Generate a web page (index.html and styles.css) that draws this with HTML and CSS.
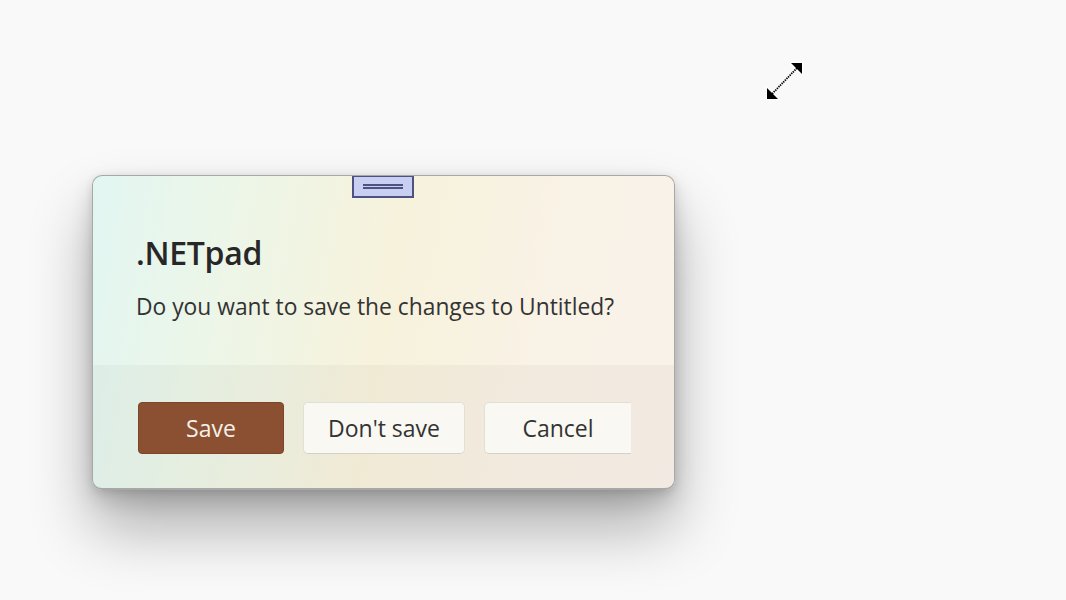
FILE: index.html
```html
<!DOCTYPE html>
<html>
<head>
<meta charset="utf-8">
<link rel="stylesheet" href="styles.css">
</head>
<body>
<div class="canvas">
  <svg class="cursor" width="48" height="44" viewBox="0 0 48 44">
    <g stroke="#fff" stroke-width="2.5" stroke-linejoin="round" fill="#fff">
      <path d="M42 5 L42 16 L31 5 Z"/>
      <path d="M7 41 L7 30 L18 41 Z"/>
      <line x1="37" y1="10" x2="12" y2="36"/>
    </g>
    <path d="M42 5 L42 16 L31 5 Z" fill="#000"/>
    <path d="M7 41 L7 30 L18 41 Z" fill="#000"/>
    <line x1="37" y1="10" x2="12" y2="36" stroke="#000" stroke-width="1.8" stroke-dasharray="1.4 0.9"/>
  </svg>
  <div class="dialog">
    <div class="handle"><span class="grip"></span></div>
    <div class="content">
      <h1 class="title">.NETpad</h1>
      <p class="message">Do you want to save the changes to Untitled?</p>
    </div>
    <div class="footer">
      <button class="btn primary">Save</button>
      <button class="btn">Don't save</button>
      <button class="btn cut">Cancel</button>
    </div>
  </div>
</div>
</body>
</html>
```
FILE: styles.css
```css
html, body {
  margin: 0;
  height: 100%;
  background: #f9f9f9;
  overflow: hidden;
}
.canvas {
  position: relative;
  height: 600px;
  padding: 175px 0 0 92px;
  box-sizing: border-box;
  font-family: "Open Sans", "Noto Sans", sans-serif;
}
.cursor {
  position: absolute;
  left: 760px;
  top: 58px;
}
.dialog {
  position: relative;
  width: 583px;
  height: 315px;
  box-sizing: border-box;
  border: 1px solid #a8a8a8;
  border-bottom: 2px solid #a8a8a8;
  border-radius: 10px;
  background:
    linear-gradient(100deg, #e2f6f2 0%, #ecf6e8 22%, #f7f2dc 50%, #f9f2e6 75%, #f9f2ea 100%);
  box-shadow: 0 38px 62px rgba(0, 0, 0, 0.3), 0 10px 22px rgba(0, 0, 0, 0.14), 0 2px 8px rgba(0,0,0,0.1);
  display: flex;
  flex-direction: column;
  overflow: hidden;
}
.handle {
  position: absolute;
  left: 259px;
  top: -1px;
  width: 62px;
  height: 23px;
  box-sizing: border-box;
  background: #c9cff0;
  border: 2px solid #4c5284;
  display: flex;
  align-items: center;
  justify-content: center;
}
.grip {
  width: 40px;
  height: 5px;
  box-sizing: border-box;
  border-top: 2px solid #4c5284;
  border-bottom: 2px solid #4c5284;
}
.content {
  height: 189px;
  padding: 0 0 0 43px;
  box-sizing: border-box;
}
.title {
  margin: 0;
  padding-top: 57px;
  font-size: 32px;
  font-weight: 600;
  line-height: 40px;
  color: #272727;
  letter-spacing: -0.3px;
}
.message {
  margin: 19px 0 0;
  font-size: 22.8px;
  line-height: 30px;
  color: #333;
  white-space: nowrap;
}
.footer {
  flex: 1;
  background: rgba(60, 40, 20, 0.035);
  display: flex;
  align-items: flex-start;
  gap: 19px;
  padding: 37px 0 0 45px;
  box-sizing: border-box;
}
.btn {
  height: 52px;
  box-sizing: border-box;
  font-family: inherit;
  font-size: 23px;
  color: #333;
  background: #f9f8f2;
  border: 1px solid #e2e0d6;
  border-bottom-color: #d4d2c8;
  border-radius: 5px;
  padding: 0;
}
.btn:nth-child(2) { width: 162px; }
.btn.primary {
  width: 146px;
  background: #8a5031;
  border-color: #7c4529;
  color: #f6f0ea;
  border-radius: 4px;
}
.btn.cut {
  width: 147px;
  border-right: none;
  border-radius: 5px 0 0 5px;
}
```
